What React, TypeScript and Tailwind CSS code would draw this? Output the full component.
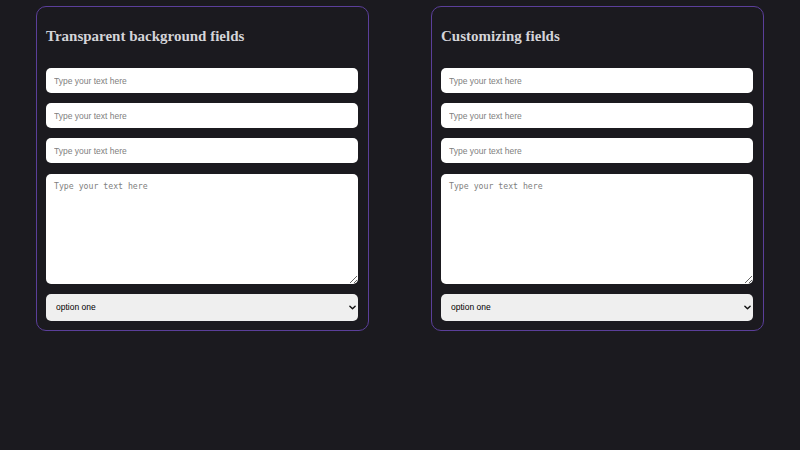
import React from 'react';

const Field = () => (
  <input
    type="text"
    placeholder="Type your text here"
    className="h-[25px] w-full rounded-[5px] bg-white px-[8px] font-['Liberation_Sans',sans-serif] text-[8.5px] text-black placeholder:text-[#808080] outline-none"
  />
);

const Picker = () => (
  <div className="relative">
    <select className="block h-[27px] w-full appearance-none rounded-[5px] bg-[#efefef] pl-[10px] pr-[14px] font-['Liberation_Sans',sans-serif] text-[8.5px] text-black outline-none">
      <option>option one</option>
      <option>option two</option>
      <option>option three</option>
    </select>
    {/* small dropdown chevron */}
    <svg
      viewBox="0 0 8 5"
      className="pointer-events-none absolute right-[2px] top-[11px] h-[5px] w-[7px]"
    >
      <path d="M1 1l3 3 3-3" fill="none" stroke="#111" strokeWidth="1.6" strokeLinecap="round" strokeLinejoin="round" />
    </svg>
  </div>
);

const FieldCard = ({ title }: { title: string }) => (
  <div className="w-[333px] rounded-[10px] border border-[#5b3f9a] pb-[9px] pl-[9px] pr-[10px] pt-[16px]">
    <h2 className="mb-[19px] font-['Liberation_Serif',serif] text-[15px] font-bold leading-[26px] text-[#d4d4d8]">
      {title}
    </h2>
    <div className="flex flex-col gap-[10px]">
      <Field />
      <Field />
      <Field />
      <textarea
        placeholder="Type your text here"
        className="mt-[1px] h-[110px] w-full rounded-[5px] bg-white px-[8px] py-[6px] font-['DejaVu_Sans_Mono',monospace] text-[8.2px] text-black placeholder:text-[#808080] outline-none"
      />
      <Picker />
    </div>
  </div>
);

export default function App() {
  return (
    <div className="flex h-[450px] w-[800px] items-start justify-between bg-[#1b1a1f] px-[36px] pt-[6px]">
      <FieldCard title="Transparent background fields" />
      <FieldCard title="Customizing fields" />
    </div>
  );
}
